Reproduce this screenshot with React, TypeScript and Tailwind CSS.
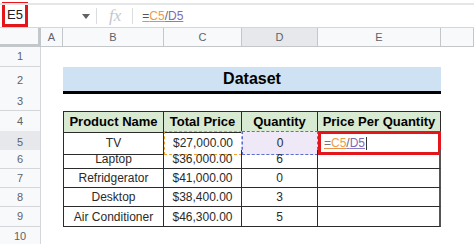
import React from 'react';

const cols = 'grid grid-cols-[41px_22px_101px_78px_76px_123px_1fr]';

const RowHead: React.FC<{ n: number; active?: boolean }> = ({ n, active }) => (
    <div
        className={`flex items-center justify-center border-r border-b border-[#d4d6d9] text-[11px] text-[#5f6368] ${active ? 'bg-[#e6e8eb]' : 'bg-[#f8f9fa]'}`}
    >
        {n}
    </div>
);

const products = [
    { name: 'Laptop', price: '$36,000.00', qty: '6' },
    { name: 'Refridgerator', price: '$41,000.00', qty: '0' },
    { name: 'Desktop', price: '$38,400.00', qty: '3' },
    { name: 'Air Conditioner', price: '$46,300.00', qty: '5' },
];

const cell = 'flex items-center justify-center border-r border-b border-[#2b2b2b] text-[12px] text-[#2a2a2a]';
const head = 'flex items-center justify-center border-r border-b border-t border-[#2b2b2b] bg-[#d9ead3] text-[13px] font-bold text-black';

export default function App() {
    return (
        <div className="w-[474px] h-[244px] overflow-hidden bg-white font-['Liberation_Sans',Arial,sans-serif]">
            {/* Formula bar */}
            <div className="relative h-[27px]">
                <div className="absolute left-0 right-0 top-[3px] h-[2px] bg-[#e4e6e8]" />
                <div className="flex h-full items-end">
                    <div className="ml-[2px] mb-0 flex h-[25px] w-[26px] items-center justify-center border-[3px] border-[#e3161b] text-[13px] text-[#202124]">
                        E5
                    </div>
                    <div className="flex h-[22px] flex-1 items-center">
                        <svg className="ml-[54px]" width="8" height="5" viewBox="0 0 8 5">
                            <path d="M0 0 L8 0 L4 5 Z" fill="#5f6368" />
                        </svg>
                        <div className="ml-[6px] h-[16px] w-px bg-[#dadce0]" />
                        <span className="ml-[12px] font-['Liberation_Serif',serif] text-[17px] italic text-[#c4c7cc]">fx</span>
                        <div className="ml-[11px] h-[16px] w-px bg-[#dadce0]" />
                        <span className="ml-[9px] text-[12px]">
                            <span className="text-[#555] underline decoration-[#e8914a]">=</span>
                            <span className="text-[#f09a4a] underline decoration-[#e8914a]">C5</span>
                            <span className="text-[#666] underline decoration-[#8e7cc3]">/</span>
                            <span className="text-[#7e6ab5] underline decoration-[#8e7cc3]">D5</span>
                        </span>
                    </div>
                </div>
            </div>

            {/* Column headers */}
            <div className={`${cols} h-[20px] border-t border-[#d4d6d9] text-[11px] text-[#5f6368]`}>
                <div className="border-r-[3px] border-b-[3px] border-[#c4c7c9] bg-[#f8f9fa]" />
                {['A', 'B', 'C', 'D', 'E', ''].map((c) => (
                    <div
                        key={c || 'F'}
                        className={`flex items-center justify-center border-r border-b border-[#c4c7c9] ${c === 'D' ? 'bg-[#e6e8eb]' : 'bg-[#f8f9fa]'}`}
                    >
                        {c}
                    </div>
                ))}
            </div>

            {/* Row 1 */}
            <div className={`${cols} h-[20px]`}>
                <RowHead n={1} />
            </div>

            {/* Row 2 */}
            <div className={`${cols} h-[25px]`}>
                <RowHead n={2} />
                <div />
                <div className="col-span-4 flex items-center justify-center border-b-[3px] border-black bg-[#cfe2f3] text-[16px] font-bold text-black">
                    Dataset
                </div>
            </div>

            {/* Row 3 */}
            <div className={`${cols} h-[19px]`}>
                <RowHead n={3} />
            </div>

            {/* Row 4 - table header */}
            <div className={`${cols} h-[20px]`}>
                <RowHead n={4} />
                <div />
                <div className={`${head} border-l`}>Product Name</div>
                <div className={head}>Total Price</div>
                <div className={head}>Quantity</div>
                <div className={head}>Price Per Quantity</div>
            </div>

            {/* Row 5 - active row */}
            <div className={`${cols} h-[19px]`}>
                <RowHead n={5} active />
                <div />
                <div className={`${cell} border-l`}>TV</div>
                <div className="flex items-center justify-center border-[1.5px] border-dashed border-[#f0a030] text-[12px] text-[#2a2a2a]">
                    $27,000.00
                </div>
                <div className="flex items-center justify-center border-[1.5px] border-dashed border-[#5a6fd0] bg-[#efe8f6] text-[12px] text-[#2a2a2a]">
                    0
                </div>
                <div className="flex items-center border-[3px] border-[#e3161b] pl-[3px] text-[12px]">
                    <span className="text-[#777] underline decoration-[#e8914a]">=</span>
                    <span className="text-[#f09a4a] underline decoration-[#e8914a]">C5</span>
                    <span className="text-[#666] underline decoration-[#8e7cc3]">/</span>
                    <span className="text-[#7e6ab5] underline decoration-[#8e7cc3]">D5</span>
                    <span className="ml-px h-[13px] w-px bg-[#333]" />
                </div>
            </div>

            {/* Rows 6-9 */}
            {products.map((p, i) => (
                <div key={p.name} className={`${cols} ${i === 3 ? 'h-[20px]' : 'h-[19px]'}`}>
                    <RowHead n={6 + i} />
                    <div />
                    <div className={`${cell} border-l`}>{p.name}</div>
                    <div className={cell}>{p.price}</div>
                    <div className={cell}>{p.qty}</div>
                    <div className={`${cell} border-r-2 border-r-[#555]`} />
                </div>
            ))}

            {/* Row 10 */}
            <div className={`${cols} h-[20px]`}>
                <RowHead n={10} />
            </div>
        </div>
    );
}
